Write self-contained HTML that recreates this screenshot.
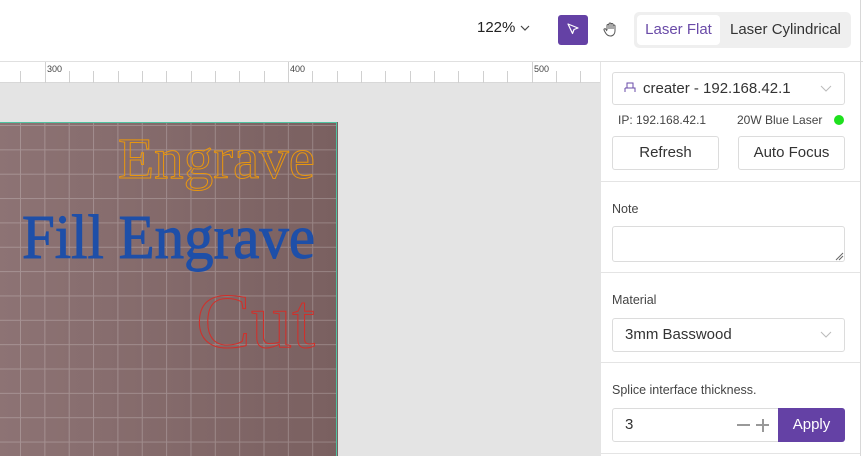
<!DOCTYPE html>
<html><head><style>
*{box-sizing:border-box;margin:0;padding:0}
body{width:863px;height:456px;overflow:hidden;background:#fff;font-family:"Liberation Sans",sans-serif;position:relative;color:#222}
.a{position:absolute}
.btn{position:absolute;border:1px solid #dcdcdc;border-radius:3px;background:#fff;text-align:center;font-size:15px;color:#333}
.lbl{position:absolute;font-size:12.5px;color:#444}
.sep{position:absolute;left:601px;width:259px;height:1px;background:#e4e4e4}
</style></head><body>
<div class="a" style="left:0;top:61px;width:863px;height:1px;background:#e0e0e0"></div>
<div class="a" style="left:477px;top:19px;font-size:15px;color:#222">122%</div>
<svg class="a" style="left:519px;top:24px" width="12" height="8"><path d="M2 2l4 4 4-4" stroke="#444" fill="none" stroke-width="1.2"/></svg>
<div class="a" style="left:558px;top:15px;width:30px;height:30px;background:#6441a5;border-radius:3px"></div>
<svg class="a" style="left:566px;top:22px" width="14" height="14"><path d="M2 2l10 4-4 1.5-1.5 4z" stroke="#fff" fill="none" stroke-width="1.2" stroke-linejoin="round"/></svg>
<svg class="a" style="left:603px;top:21px" width="15" height="16"><path d="M4 9V4.5a1 1 0 0 1 2 0V8M6 8V3a1 1 0 0 1 2 0v5M8 8V3.5a1 1 0 0 1 2 0V8M10 8V5a1 1 0 0 1 2 0v5c0 3-2 5-4.5 5S3 13 2 11l-1-2a1 1 0 0 1 2-.5L4 10" stroke="#555" fill="none" stroke-width="1"/></svg>
<div class="a" style="left:634px;top:12px;width:217px;height:36px;background:#efefef;border-radius:5px"></div>
<div class="a" style="left:637px;top:15px;width:83px;height:30px;background:#fff;border-radius:4px;color:#6a4ba8;font-size:15px;text-align:center;line-height:29px">Laser Flat</div>
<div class="a" style="left:730px;top:15px;font-size:15px;line-height:29px;color:#333">Laser Cylindrical</div>
<svg class="a" style="left:0;top:62px" width="600" height="21">
<rect width="600" height="21" fill="#fff"/>
<line x1="0" y1="20.5" x2="600" y2="20.5" stroke="#d8d8d8"/>
<g stroke="#d0d0d0">
<line x1="20.5" y1="9" x2="20.5" y2="21"/><line x1="45.5" y1="0" x2="45.5" y2="21"/><line x1="69.5" y1="9" x2="69.5" y2="21"/><line x1="93.5" y1="9" x2="93.5" y2="21"/><line x1="118.5" y1="9" x2="118.5" y2="21"/><line x1="142.5" y1="9" x2="142.5" y2="21"/><line x1="166.5" y1="9" x2="166.5" y2="21"/><line x1="191.5" y1="9" x2="191.5" y2="21"/><line x1="215.5" y1="9" x2="215.5" y2="21"/><line x1="239.5" y1="9" x2="239.5" y2="21"/><line x1="264.5" y1="9" x2="264.5" y2="21"/><line x1="288.5" y1="0" x2="288.5" y2="21"/><line x1="312.5" y1="9" x2="312.5" y2="21"/><line x1="337.5" y1="9" x2="337.5" y2="21"/><line x1="361.5" y1="9" x2="361.5" y2="21"/><line x1="385.5" y1="9" x2="385.5" y2="21"/><line x1="410.5" y1="9" x2="410.5" y2="21"/><line x1="434.5" y1="9" x2="434.5" y2="21"/><line x1="458.5" y1="9" x2="458.5" y2="21"/><line x1="483.5" y1="9" x2="483.5" y2="21"/><line x1="507.5" y1="9" x2="507.5" y2="21"/><line x1="532.5" y1="0" x2="532.5" y2="21"/><line x1="556.5" y1="9" x2="556.5" y2="21"/><line x1="580.5" y1="9" x2="580.5" y2="21"/>
</g>
<g font-size="9" fill="#444" font-family="Liberation Sans"><text x="47" y="10">300</text><text x="290" y="10">400</text><text x="534" y="10">500</text></g>
</svg>
<div class="a" style="left:0;top:83px;width:601px;height:373px;background:#e4e4e4"></div>
<svg class="a" style="left:0;top:122px" width="338" height="334">
<defs><linearGradient id="g" x1="0" y1="0" x2="1" y2="0"><stop offset="0" stop-color="#8d7374"/><stop offset="1" stop-color="#7a6060"/></linearGradient>
<pattern id="p" width="24.35" height="24.35" patternUnits="userSpaceOnUse" x="20" y="3"><path d="M0.5 0V24.35M0 0.5H24.35" stroke="#ffffff" stroke-opacity="0.22" stroke-width="1" fill="none"/></pattern></defs>
<rect width="338" height="334" fill="url(#g)"/>
<rect width="336" height="334" fill="url(#p)"/>
<line x1="0" y1="0.5" x2="337" y2="0.5" stroke="#4fc3a1"/><line x1="336.5" y1="0" x2="336.5" y2="334" stroke="#4fc3a1"/>
<g font-family="Liberation Serif">
<text x="118" y="56" font-size="58" textLength="197" lengthAdjust="spacingAndGlyphs" fill="none" stroke="#e8960f" stroke-width="1">Engrave</text>
<text x="22" y="136" font-size="62" textLength="293" lengthAdjust="spacingAndGlyphs" fill="#1e4fa8" stroke="#1e4fa8" stroke-width="1">Fill Engrave</text>
<text x="196" y="225" font-size="78" textLength="119" lengthAdjust="spacingAndGlyphs" fill="none" stroke="#d0302b" stroke-width="1">Cut</text>
</g></svg>
<div class="a" style="left:600px;top:62px;width:1px;height:394px;background:#e4e4e4"></div>
<div class="a" style="left:860px;top:0;width:1px;height:456px;background:#d8d8d8"></div>
<div class="btn" style="left:612px;top:72px;width:233px;height:33px;text-align:left;padding-left:30px;line-height:31px">creater - 192.168.42.1</div>
<svg class="a" style="left:624px;top:82px" width="12" height="12"><path d="M3 1h6v5H3zM1 6h10v4M1 6v4" stroke="#6a4ba8" fill="none"/></svg>
<svg class="a" style="left:820px;top:85px" width="12" height="8"><path d="M1 1l5 5 5-5" stroke="#bbb" fill="none"/></svg>
<div class="lbl" style="left:618px;top:113px;font-size:12px">IP: 192.168.42.1</div>
<div class="lbl" style="left:737px;top:113px;font-size:12px">20W Blue Laser</div>
<div class="a" style="left:834px;top:115px;width:10px;height:10px;border-radius:50%;background:#1ee01e"></div>
<div class="btn" style="left:612px;top:136px;width:107px;height:34px;line-height:32px">Refresh</div>
<div class="btn" style="left:738px;top:136px;width:107px;height:34px;line-height:32px">Auto Focus</div>
<div class="sep" style="top:181px"></div>
<div class="lbl" style="left:612px;top:202px">Note</div>
<div class="btn" style="left:612px;top:226px;width:233px;height:36px"></div>
<svg class="a" style="left:835px;top:252px" width="9" height="9"><path d="M1 8L8 1M4 8L8 4" stroke="#666"/></svg>
<div class="sep" style="top:272px"></div>
<div class="lbl" style="left:612px;top:293px">Material</div>
<div class="btn" style="left:612px;top:318px;width:233px;height:34px;text-align:left;padding-left:12px;line-height:32px">3mm Basswood</div>
<svg class="a" style="left:820px;top:331px" width="12" height="8"><path d="M1 1l5 5 5-5" stroke="#bbb" fill="none"/></svg>
<div class="sep" style="top:362px"></div>
<div class="lbl" style="left:612px;top:383px">Splice interface thickness.</div>
<div class="btn" style="left:612px;top:408px;width:233px;height:34px;text-align:left;padding-left:12px;line-height:32px">3</div>
<div class="a" style="left:737px;top:424px;width:13px;height:2px;background:#999"></div>
<div class="a" style="left:756px;top:424px;width:13px;height:2px;background:#999"></div>
<div class="a" style="left:761.5px;top:418.5px;width:2px;height:13px;background:#999"></div>
<div class="a" style="left:778px;top:408px;width:67px;height:34px;background:#6441a5;border-radius:0 3px 3px 0;color:#fff;font-size:15px;text-align:center;line-height:34px">Apply</div>
<div class="sep" style="top:453px"></div>
</body></html>
